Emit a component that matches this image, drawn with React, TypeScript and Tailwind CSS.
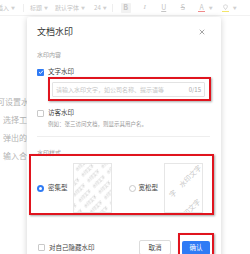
import React from "react";
import { X } from "lucide-react";

const font = { fontFamily: '"Noto Sans CJK SC", "Noto Sans", sans-serif' };

function Caret() {
  return <span className="ml-[2px] text-[4px] text-[#d0d0d0]">▼</span>;
}

function Check({ on }: { on?: boolean }) {
  if (on) {
    return (
      <div className="w-[7px] h-[7px] rounded-[1px] bg-[#2f7bf5] flex items-center justify-center">
        <svg width="6" height="6" viewBox="0 0 6 6">
          <path d="M1 3.2 L2.4 4.5 L5 1.6" stroke="#fff" strokeWidth="1" fill="none" />
        </svg>
      </div>
    );
  }
  return <div className="w-[7px] h-[7px] rounded-[1px] border border-[#c9c9c9] bg-white" />;
}

function Radio({ on }: { on?: boolean }) {
  if (on) {
    return (
      <div className="w-[7px] h-[7px] rounded-full bg-[#2f7bf5] flex items-center justify-center">
        <div className="w-[3px] h-[3px] rounded-full bg-white" />
      </div>
    );
  }
  return <div className="w-[7px] h-[7px] rounded-full border border-[#c9c9c9] bg-white" />;
}

function DensePreview() {
  return (
    <div className="w-[39px] h-[50px] border border-[#e6e6e6] bg-white overflow-hidden">
      <svg width="39" height="50" viewBox="0 0 39 50">
        <defs>
          <pattern id="pd" width="20" height="8" patternUnits="userSpaceOnUse" patternTransform="rotate(-45) translate(-4 2)">
            <text x="1" y="6" fontSize="4" fill="#c4c4c4" style={font}>水印文字</text>
          </pattern>
        </defs>
        <rect width="39" height="50" fill="url(#pd)" />
      </svg>
    </div>
  );
}

function LoosePreview() {
  return (
    <div className="w-[39px] h-[50px] border border-[#e6e6e6] bg-white overflow-hidden">
      <svg width="39" height="50" viewBox="0 0 39 50">
        <text x="20" y="20" fontSize="7" fill="#c6c6c6" textAnchor="middle" transform="rotate(-45 20 17)" style={font}>
          字　水印文字
        </text>
        <text x="24" y="49" fontSize="7" fill="#c6c6c6" textAnchor="middle" transform="rotate(-45 24 46)" style={font}>
          水印文字
        </text>
      </svg>
    </div>
  );
}

export default function App() {
  return (
    <div className="relative w-[250px] h-[254px] overflow-hidden bg-white" style={font}>
      {/* toolbar */}
      <div className="flex h-[16px] items-center text-[6px] text-[#c4c4c4] border-b border-[#f2f2f2] whitespace-nowrap">
        <span className="ml-[-3px]">插入</span>
        <Caret />
        <div className="ml-[8px] w-px h-[8px] bg-[#eee]" />
        <span className="ml-[6px]">标题</span>
        <Caret />
        <span className="ml-[7px]">默认字体</span>
        <Caret />
        <span className="ml-[9px]">24</span>
        <Caret />
        <div className="ml-[5px] w-px h-[8px] bg-[#eee]" />
        <div className="ml-[8px] w-[10px] h-[10px] bg-[#f2f2f2] rounded-[1px] flex items-center justify-center text-[7px] font-bold">B</div>
        <div className="ml-[9px] w-[10px] flex justify-center text-[7px] italic" style={{ fontFamily: '"Liberation Serif", serif' }}>I</div>
        <div className="ml-[9px] w-[10px] flex justify-center text-[7px] underline">U</div>
        <div className="ml-[9px] w-[10px] flex justify-center text-[7px] line-through">S</div>
        <div className="ml-[9px] w-[10px] flex flex-col items-center">
          <span className="text-[7px] leading-[7px] text-[#c8c8c8]">A</span>
          <div className="w-[7px] h-[1px] bg-[#f08a8a]" />
        </div>
        <Caret />
        <div className="ml-[8px] w-[10px] flex flex-col items-center">
          <svg width="7" height="7" viewBox="0 0 7 7">
            <path d="M3.5 0.8 C5.2 0.8 5.8 2.2 5 3.6 L3.5 5.6 L2 3.6 C1.2 2.2 1.8 0.8 3.5 0.8 Z" fill="none" stroke="#c4c4c4" strokeWidth="0.7" />
          </svg>
          <div className="w-[7px] h-[1px] bg-[#f3e66b]" />
        </div>
        <Caret />
      </div>

      {/* page text behind */}
      <div className="pt-[77px] flex flex-col text-[8px] leading-[18px] text-[#b4b4b4] whitespace-nowrap">
        <span className="ml-[-3px]">可设置水印</span>
        <span className="ml-[3px]">选择工具</span>
        <span className="ml-[3px]">弹出的</span>
        <span className="ml-[3px]">输入合</span>
      </div>

      {/* dialog */}
      <div className="absolute left-[27px] top-[17px] w-[194px] h-[260px] bg-white rounded-[2px] shadow-[0_1px_6px_rgba(0,0,0,0.18)]">
        <div className="flex flex-col pl-[10px] pr-[11px]">
          <div className="h-[30px] flex items-center justify-between">
            <span className="text-[9px] text-[#333]">文档水印</span>
            <X size={8} strokeWidth={1.6} className="mr-[4px] text-[#555]" />
          </div>
          <div className="h-[14px] flex items-center text-[6px] text-[#a0a0a0]">水印内容</div>
          <div className="mt-[4px] h-[14px] flex items-center gap-[4px] text-[6.5px] text-[#444]">
            <Check on />
            <span>文字水印</span>
          </div>
          <div className="mt-[3px] ml-[15px] mr-[5px] h-[15px] border border-[#e3e3e3] rounded-[1px] flex items-center justify-between px-[3px] text-[6px] whitespace-nowrap">
            <span className="text-[#c6c6c6]">请输入水印文字，如公司名称、提示语等</span>
            <span className="text-[#a8a8a8]">0/15</span>
          </div>
          <div className="mt-[10px] h-[12px] flex items-center gap-[4px] text-[6.5px] text-[#444]">
            <Check />
            <span>访客水印</span>
          </div>
          <div className="ml-[11px] h-[10px] flex items-center text-[5.5px] text-[#999] whitespace-nowrap">例如：张三访问文档，则显示其用户名。</div>
          <div className="mt-[7px] h-px bg-[#eeeeee]" />
          <div className="mt-[8px] h-[14px] flex items-center text-[6px] text-[#a0a0a0]">水印样式</div>
          <div className="mt-[4px] h-[50px] flex items-center text-[6.5px] text-[#444]">
            <Radio on />
            <span className="ml-[4px]">密集型</span>
            <div className="ml-[5px]"><DensePreview /></div>
            <div className="ml-[17px]"><Radio /></div>
            <span className="ml-[3px]">宽松型</span>
            <div className="ml-[6px]"><LoosePreview /></div>
          </div>
          <div className="mt-[27px] h-[15px] flex items-center text-[6.5px] text-[#444]">
            <div className="ml-[1px]"><Check /></div>
            <span className="ml-[4px]">对自己隐藏水印</span>
            <div className="ml-auto w-[32px] h-[15px] border border-[#dcdcdc] rounded-[2px] flex items-center justify-center text-[#444]">取消</div>
            <div className="ml-[11px] w-[28px] h-[14px] bg-[#2f7bf5] rounded-[2px] flex items-center justify-center text-white">确认</div>
          </div>
        </div>

        {/* annotation boxes */}
        <div className="absolute left-[21px] top-[60px] w-[163px] h-[24px] border-2 border-[#e0141e] shadow-[1px_1px_2px_rgba(0,0,0,0.35)]" />
        <div className="absolute left-[2px] top-[137px] w-[185px] h-[61px] border-2 border-[#e0141e] shadow-[1px_1px_2px_rgba(0,0,0,0.35)]" />
        <div className="absolute left-[151px] top-[216px] w-[36px] h-[45px] border-2 border-[#e0141e] shadow-[1px_1px_2px_rgba(0,0,0,0.35)]" />
      </div>
    </div>
  );
}
